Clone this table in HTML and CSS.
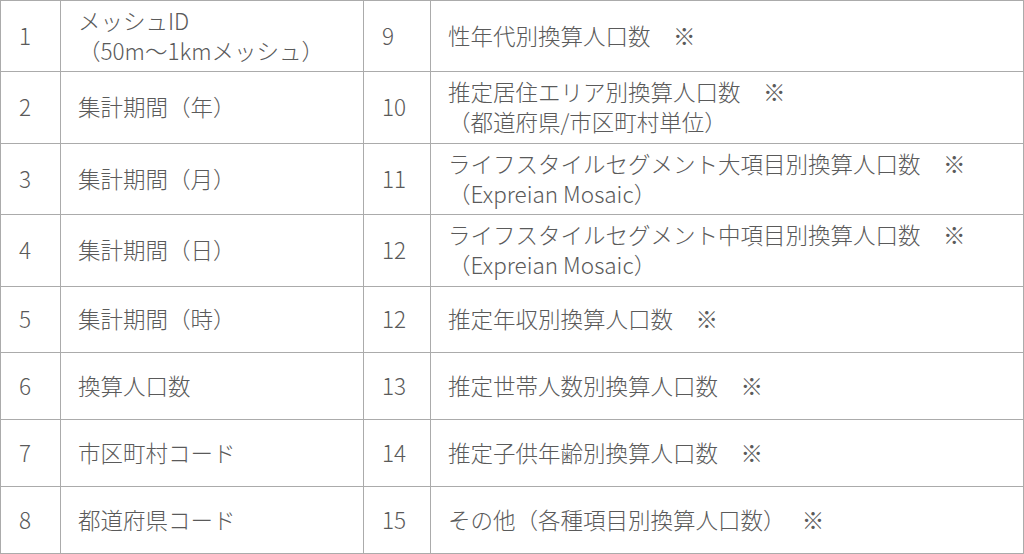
FILE: index.html
```html
<!DOCTYPE html>
<html lang="ja">
<head>
<meta charset="utf-8">
<link rel="stylesheet" href="styles.css">
</head>
<body>
<table class="items">
  <colgroup>
    <col class="c-no"><col class="c-name"><col class="c-no2"><col class="c-name2">
  </colgroup>
  <tr class="r-tall">
    <td class="no">1</td>
    <td class="name">メッシュID<br>（50m〜1kmメッシュ）</td>
    <td class="no">9</td>
    <td class="name">性年代別換算人口数　※</td>
  </tr>
  <tr class="r-tall2">
    <td class="no">2</td>
    <td class="name">集計期間（年）</td>
    <td class="no">10</td>
    <td class="name">推定居住エリア別換算人口数　※<br>（都道府県/市区町村単位）</td>
  </tr>
  <tr class="r-tall">
    <td class="no">3</td>
    <td class="name">集計期間（月）</td>
    <td class="no">11</td>
    <td class="name">ライフスタイルセグメント大項目別換算人口数　※<br>（Expreian Mosaic）</td>
  </tr>
  <tr class="r-tall2">
    <td class="no">4</td>
    <td class="name">集計期間（日）</td>
    <td class="no">12</td>
    <td class="name">ライフスタイルセグメント中項目別換算人口数　※<br>（Expreian Mosaic）</td>
  </tr>
  <tr class="r-short">
    <td class="no">5</td>
    <td class="name">集計期間（時）</td>
    <td class="no">12</td>
    <td class="name">推定年収別換算人口数　※</td>
  </tr>
  <tr class="r-short2">
    <td class="no">6</td>
    <td class="name">換算人口数</td>
    <td class="no">13</td>
    <td class="name">推定世帯人数別換算人口数　※</td>
  </tr>
  <tr class="r-short2">
    <td class="no">7</td>
    <td class="name">市区町村コード</td>
    <td class="no">14</td>
    <td class="name">推定子供年齢別換算人口数　※</td>
  </tr>
  <tr class="r-short2">
    <td class="no">8</td>
    <td class="name">都道府県コード</td>
    <td class="no">15</td>
    <td class="name">その他（各種項目別換算人口数）　 ※</td>
  </tr>
</table>
</body>
</html>
```

FILE: styles.css
```css
html, body {
  margin: 0;
  padding: 0;
  background: #ffffff;
}

.items {
  border-collapse: collapse;
  table-layout: fixed;
  width: 1023px;
  font-family: "Noto Sans CJK JP", "Noto Sans", sans-serif;
  font-weight: 300;
  font-size: 22.5px;
  line-height: 30px;
  color: #5a5a5a;
}

.c-no { width: 60px; }
.c-name { width: 303px; }
.c-no2 { width: 67px; }
.c-name2 { width: 593px; }

.items td {
  border: 1px solid #ababab;
  padding: 0 0 3px 17px;
  vertical-align: middle;
  white-space: nowrap;
}

.items td.no {
  padding-left: 18px;
}

.r-tall td { height: 67px; }
.r-tall2 td { height: 68px; }
.r-short td { height: 62px; }
.r-short2 td { height: 63px; }
```
